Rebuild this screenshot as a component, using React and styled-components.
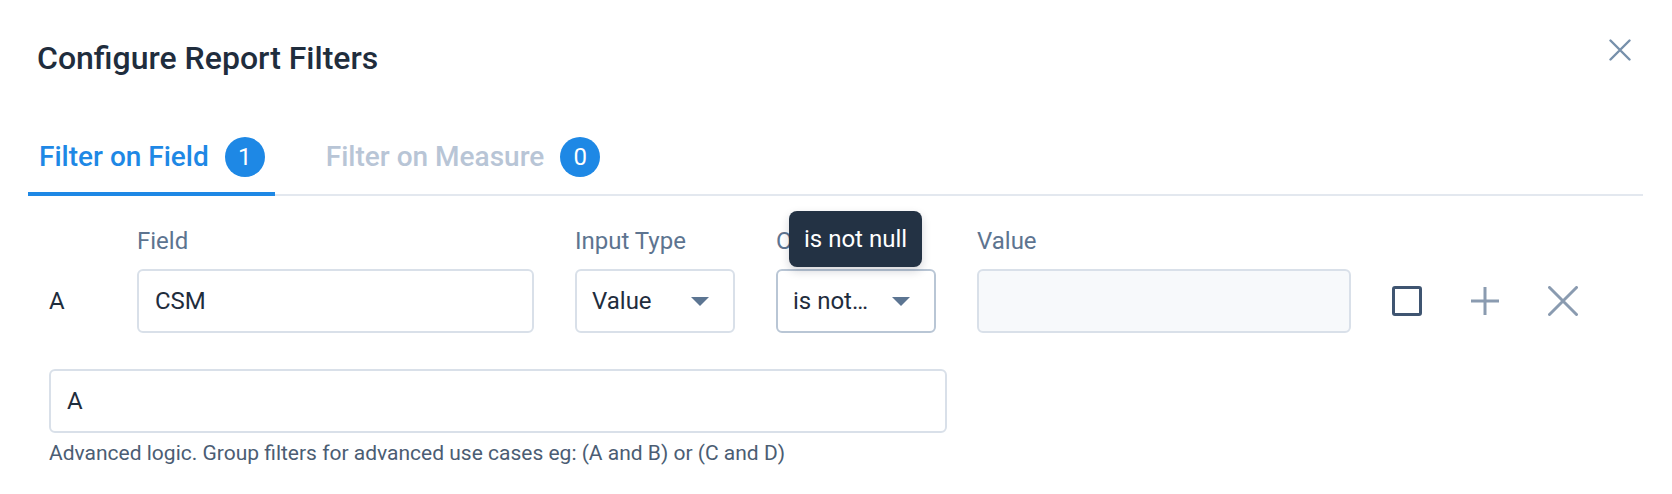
import styled, { createGlobalStyle } from "styled-components";

const GlobalStyle = createGlobalStyle`
  * {
    box-sizing: border-box;
  }
  body {
    margin: 0;
    background: #ffffff;
    font-family: Roboto, "Noto Sans", Arial, sans-serif;
  }
`;

const Modal = styled.div`
  padding: 38px 29px 0 28px;
`;

const Header = styled.div`
  display: flex;
  justify-content: space-between;
  align-items: flex-start;
  padding-left: 9px;
`;

const Title = styled.h2`
  margin: 0;
  font-size: 32px;
  line-height: 40px;
  font-weight: 500;
  color: #1f2d3d;
`;

const CloseButton = styled.button`
  display: flex;
  width: 22px;
  height: 22px;
  margin: 1px 12px 0 0;
  padding: 0;
  border: 0;
  background: none;
  color: #7690ab;
  cursor: pointer;
`;

const TabList = styled.div`
  display: flex;
  gap: 40px;
  margin-top: 44px;
  border-bottom: 2px solid #e3e8ef;
`;

const Tab = styled.button`
  display: flex;
  align-items: center;
  gap: 16px;
  margin-bottom: -2px;
  padding: 15px 10px 15px 11px;
  border: 0;
  border-bottom: 4px solid ${({ $active }) => ($active ? "#1e88e5" : "transparent")};
  background: none;
  font-family: inherit;
  font-size: 28px;
  line-height: 32px;
  font-weight: 500;
  color: ${({ $active }) => ($active ? "#1e88e5" : "#b8c5d6")};
  cursor: pointer;
`;

const Badge = styled.span`
  display: flex;
  align-items: center;
  justify-content: center;
  width: 40px;
  height: 40px;
  border-radius: 50%;
  background: #1e88e5;
  color: #ffffff;
  font-size: 24px;
  font-weight: 400;
`;

const FilterSection = styled.div`
  padding: 31px 0 0 21px;
`;

const FilterGrid = styled.div`
  display: grid;
  grid-template-columns: 47px 397px 160px 160px 374px auto;
  column-gap: 41px;
  row-gap: 14px;
  align-items: center;
`;

const Label = styled.div`
  position: relative;
  font-size: 24px;
  line-height: 28px;
  color: #5d7490;
`;

const RowLetter = styled.div`
  font-size: 24px;
  line-height: 28px;
  color: #1f2d3d;
`;

const TextInput = styled.input`
  width: ${({ $width }) => $width || "100%"};
  height: 64px;
  padding: 0 16px;
  border: 2px solid #d9e0e9;
  border-radius: 6px;
  background: ${({ disabled }) => (disabled ? "#f7f9fb" : "#ffffff")};
  font-family: inherit;
  font-size: 24px;
  color: #1f2d3d;
  outline: none;
`;

const Select = styled.div`
  display: flex;
  align-items: center;
  justify-content: space-between;
  gap: 21px;
  height: 64px;
  padding: 0 24px 0 15px;
  border: 2px solid ${({ $focused }) => ($focused ? "#b9c6d5" : "#d9e0e9")};
  border-radius: 6px;
  font-size: 24px;
  color: #1f2d3d;
`;

const SelectText = styled.span`
  flex: 1;
  min-width: 0;
  overflow: hidden;
  white-space: nowrap;
  text-overflow: ellipsis;
`;

const Caret = styled.span`
  flex: none;
  width: 0;
  height: 0;
  border-left: 9px solid transparent;
  border-right: 9px solid transparent;
  border-top: 9px solid #5c7592;
`;

const Tooltip = styled.div`
  position: absolute;
  left: 13px;
  top: -16px;
  height: 56px;
  padding: 0 15px;
  border-radius: 8px;
  background: #233244;
  box-shadow: 0 4px 10px rgba(15, 23, 42, 0.18);
  color: #ffffff;
  font-size: 24px;
  line-height: 56px;
  white-space: nowrap;
`;

const Actions = styled.div`
  display: flex;
  align-items: center;
  gap: 48px;
`;

const Checkbox = styled.span`
  width: 30px;
  height: 30px;
  border: 3px solid #3f5571;
  border-radius: 3px;
`;

const IconButton = styled.button`
  display: flex;
  width: 30px;
  height: 30px;
  padding: 0;
  border: 0;
  background: none;
  color: #8a9bb0;
  cursor: pointer;
`;

const Advanced = styled.div`
  margin-top: 36px;
`;

const Helper = styled.p`
  margin: 8px 0 0;
  font-size: 21px;
  line-height: 24px;
  color: #4b5d73;
`;

const CloseIcon = ({ size, stroke }) => (
  <svg width={size} height={size} viewBox={`0 0 ${size} ${size}`} fill="none">
    <path
      d={`M1.5 1.5 L${size - 1.5} ${size - 1.5} M${size - 1.5} 1.5 L1.5 ${size - 1.5}`}
      stroke="currentColor"
      strokeWidth={stroke}
      strokeLinecap="round"
    />
  </svg>
);

const PlusIcon = () => (
  <svg width="30" height="30" viewBox="0 0 30 30" fill="none">
    <path d="M15 1 V29 M1 15 H29" stroke="currentColor" strokeWidth="3" />
  </svg>
);

export default function App() {
  return (
    <>
      <GlobalStyle />
      <Modal>
        <Header>
          <Title>Configure Report Filters</Title>
          <CloseButton aria-label="Close">
            <CloseIcon size={22} stroke={2.4} />
          </CloseButton>
        </Header>

        <TabList>
          <Tab $active>
            Filter on Field
            <Badge>1</Badge>
          </Tab>
          <Tab>
            Filter on Measure
            <Badge>0</Badge>
          </Tab>
        </TabList>

        <FilterSection>
          <FilterGrid>
            <span />
            <Label>Field</Label>
            <Label>Input Type</Label>
            <Label>
              Operator
              <Tooltip>is not null</Tooltip>
            </Label>
            <Label>Value</Label>
            <span />

            <RowLetter>A</RowLetter>
            <TextInput defaultValue="CSM" />
            <Select>
              <SelectText>Value</SelectText>
              <Caret />
            </Select>
            <Select $focused>
              <SelectText>is not null</SelectText>
              <Caret />
            </Select>
            <TextInput disabled />
            <Actions>
              <Checkbox />
              <IconButton aria-label="Add filter">
                <PlusIcon />
              </IconButton>
              <IconButton aria-label="Remove filter">
                <CloseIcon size={30} stroke={3} />
              </IconButton>
            </Actions>
          </FilterGrid>

          <Advanced>
            <TextInput $width="898px" defaultValue="A" />
            <Helper>
              Advanced logic. Group filters for advanced use cases eg: (A and B) or (C and D)
            </Helper>
          </Advanced>
        </FilterSection>
      </Modal>
    </>
  );
}
